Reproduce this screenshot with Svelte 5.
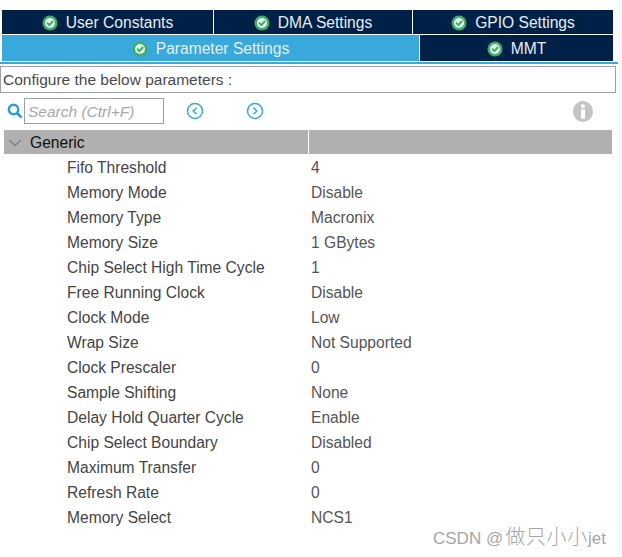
<script>
    const topTabs = ['User Constants', 'DMA Settings', 'GPIO Settings']

    const params = [
        ['Fifo Threshold', '4'],
        ['Memory Mode', 'Disable'],
        ['Memory Type', 'Macronix'],
        ['Memory Size', '1 GBytes'],
        ['Chip Select High Time Cycle', '1'],
        ['Free Running Clock', 'Disable'],
        ['Clock Mode', 'Low'],
        ['Wrap Size', 'Not Supported'],
        ['Clock Prescaler', '0'],
        ['Sample Shifting', 'None'],
        ['Delay Hold Quarter Cycle', 'Enable'],
        ['Chip Select Boundary', 'Disabled'],
        ['Maximum Transfer', '0'],
        ['Refresh Rate', '0'],
        ['Memory Select', 'NCS1']
    ]
</script>

{#snippet check()}
    <svg class="check" viewBox="0 0 16 16" width="16" height="16">
        <circle cx="8" cy="8" r="7.5" fill="#3fae6c"/>
        <circle cx="8" cy="8" r="5" fill="#e4f3ea"/>
        <path d="M5 7.6 L7.4 10 L11.2 6" fill="none" stroke="#3fae6c" stroke-width="2"/>
    </svg>
{/snippet}

<div class="page">
    <div class="tabs">
        <div class="tabRow top">
            {#each topTabs as tab}
                <div class="tab">{@render check()}<span>{tab}</span></div>
            {/each}
        </div>
        <div class="tabRow bottom">
            <div class="tab active">{@render check()}<span>Parameter Settings</span></div>
            <div class="tab">{@render check()}<span>MMT</span></div>
        </div>
    </div>
    <div class="blueLine"></div>

    <div class="configure">Configure the below parameters :</div>

    <div class="searchBar">
        <svg class="lens" viewBox="0 0 16 16" width="16" height="16">
            <circle cx="6.5" cy="6.5" r="4.7" fill="none" stroke="#2a9fd6" stroke-width="2.4"/>
            <path d="M10 10 L14.5 14.5" stroke="#2a9fd6" stroke-width="2.6"/>
        </svg>
        <div class="searchBox">Search (Ctrl+F)</div>
        <svg class="nav prev" viewBox="0 0 18 18" width="18" height="18">
            <circle cx="9" cy="9" r="7.5" fill="none" stroke="#35a8dc" stroke-width="1.5"/>
            <path d="M10.5 5.8 L7.2 9 L10.5 12.2" fill="none" stroke="#35a8dc" stroke-width="1.5"/>
        </svg>
        <svg class="nav next" viewBox="0 0 18 18" width="18" height="18">
            <circle cx="9" cy="9" r="7.5" fill="none" stroke="#35a8dc" stroke-width="1.5"/>
            <path d="M7.5 5.8 L10.8 9 L7.5 12.2" fill="none" stroke="#35a8dc" stroke-width="1.5"/>
        </svg>
        <svg class="info" viewBox="0 0 20 21" width="20" height="21">
            <ellipse cx="10" cy="10.5" rx="10" ry="10.5" fill="#c4c4c4"/>
            <circle cx="10" cy="5.2" r="2" fill="#fff"/>
            <rect x="8" y="8.5" width="4" height="9" fill="#fff"/>
        </svg>
    </div>

    <div class="groupHead">
        <div class="groupName">
            <svg viewBox="0 0 14 8" width="14" height="8">
                <path d="M1 1 L7 6.5 L13 1" fill="none" stroke="#808080" stroke-width="1.3"/>
            </svg>
            <span>Generic</span>
        </div>
        <div class="groupValue"></div>
    </div>

    <div class="rows">
        {#each params as p}
            <div class="row">
                <div class="name">{p[0]}</div>
                <div class="value">{p[1]}</div>
            </div>
        {/each}
    </div>

    <div class="watermark">CSDN @<span class="cjk">做只小小</span>jet</div>
    <div class="edge"></div>
</div>

<style>
    :global(body){
        margin: 0;
        background: #ffffff;
    }
    .page{
        position: relative;
        box-sizing: border-box;
        width: 622px;
        height: 557px;
        padding-top: 10px;
        overflow: hidden;
        font-family: "Liberation Sans", Arial, sans-serif;
        font-size: 15.6px;
        color: #444444;
    }
    .tabs{
        display: flex;
        flex-direction: column;
        gap: 1px;
        width: 611px;
        margin-left: 2px;
    }
    .tabRow{
        display: grid;
        gap: 1px;
    }
    .tabRow.top{
        grid-template-columns: 211px 198px 200px;
        height: 24px;
    }
    .tabRow.bottom{
        grid-template-columns: 417px 193px;
        height: 26px;
    }
    .tab{
        display: flex;
        align-items: center;
        justify-content: center;
        gap: 8px;
        padding-top: 1px;
        background: #002147;
        color: #e8edf3;
    }
    .tab.active{
        background: #39a9dc;
    }
    .check{
        flex: none;
    }
    .blueLine{
        position: relative;
        z-index: 1;
        width: 618px;
        height: 2px;
        margin-top: 1px;
        background: #39a9dc;
    }
    .configure{
        box-sizing: border-box;
        width: 616px;
        height: 27px;
        margin: 2px 0 0 0;
        padding-left: 2px;
        border: 1px solid #9aa0a6;
        line-height: 25px;
        font-size: 15.5px;
        color: #4a4a4a;
    }
    .searchBar{
        position: relative;
        display: flex;
        align-items: center;
        height: 26px;
        margin-top: 5px;
        padding-left: 7px;
    }
    .lens{
        flex: none;
    }
    .searchBox{
        box-sizing: border-box;
        width: 140px;
        height: 26px;
        margin-left: 1px;
        padding: 1px 0 0 3px;
        border: 1px solid #9aa0a6;
        line-height: 24px;
        font-size: 15.5px;
        font-style: italic;
        color: #a8a8a8;
    }
    .nav{
        flex: none;
    }
    .prev{
        margin-left: 22px;
    }
    .next{
        margin-left: 42px;
    }
    .info{
        flex: none;
        margin-left: 309px;
    }
    .groupHead{
        display: grid;
        grid-template-columns: 304px 303px;
        gap: 1px;
        height: 24px;
        margin: 6px 0 0 4px;
    }
    .groupName, .groupValue{
        background: #b0b0b0;
    }
    .groupName{
        display: flex;
        align-items: center;
        gap: 8px;
        padding: 1px 0 0 4px;
        box-sizing: border-box;
        color: #111111;
    }
    .rows{
        padding-top: 1px;
    }
    .row{
        display: flex;
        height: 25px;
        line-height: 25px;
    }
    .name{
        width: 244px;
        margin-left: 67px;
    }
    .value{
        color: #555555;
    }
    .watermark{
        position: absolute;
        left: 433px;
        top: 525px;
        font-family: "Liberation Sans", "Noto Sans CJK SC", sans-serif;
        font-size: 17px;
        line-height: 22px;
        color: #a6a6a6;
    }
    .cjk{
        margin-left: 2px;
        letter-spacing: 0.7px;
        font-family: "Noto Sans CJK SC", sans-serif;
        font-size: 20px;
        font-weight: 300;
    }
    .edge{
        position: absolute;
        top: 0;
        left: 617px;
        width: 5px;
        height: 100%;
        background: #f8f9fa;
    }
</style>
